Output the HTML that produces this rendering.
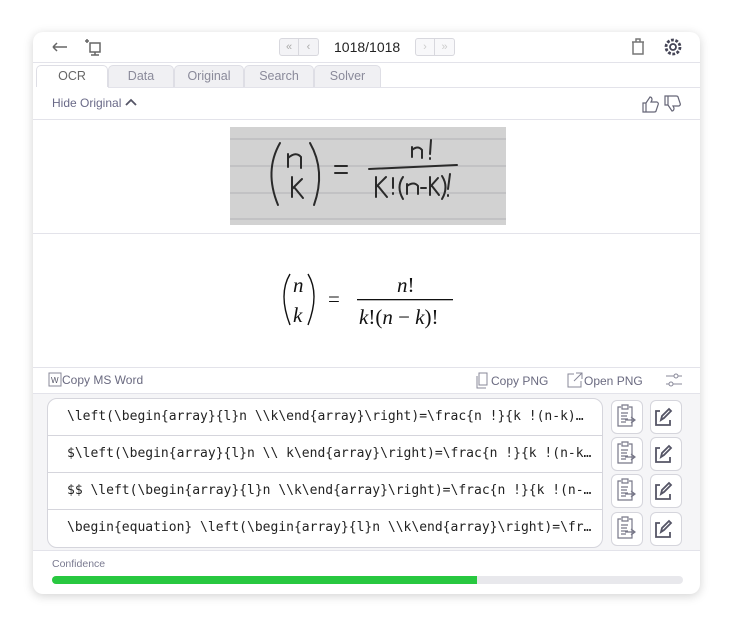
<!DOCTYPE html>
<html><head><style>
*{box-sizing:border-box;margin:0;padding:0}
body{width:732px;height:628px;background:#fff;font-family:"Liberation Sans",sans-serif;position:relative;overflow:hidden}
.card{position:absolute;left:33px;top:32px;width:667px;height:562px;background:#fff;border-radius:10px;box-shadow:0 2px 10px rgba(0,0,0,.18);overflow:hidden}
.abs{position:absolute}
.hl{position:absolute;left:0;width:667px;height:1px;background:#e3e3ea}
.tab{position:absolute;top:33px;height:22px;background:#f0f0f3;border:1px solid #dedee5;border-bottom:none;border-radius:5px 5px 0 0;font-size:12.5px;color:#8a8a9a;text-align:center;line-height:21px}
.code{position:absolute;left:14px;width:556px;background:#fff;border:1px solid #d5d5dc;font-family:"DejaVu Sans Mono","Liberation Mono",monospace;font-size:13px;color:#222;padding-left:19px;line-height:36px;white-space:nowrap;overflow:hidden;letter-spacing:0}
.btn{position:absolute;width:32px;height:34px;border:1px solid #d5d5dc;border-radius:6px;background:#fff}
.nav{position:absolute;top:6px;height:18px;border:1px solid #d8d8de;background:#f3f3f6;color:#aaa;font-size:11px;text-align:center;line-height:16px}
</style></head><body>
<div class="card">
 <svg class="abs" style="left:18px;top:7px" width="18" height="16"><path d="M2 8H16M2 8L6 4M2 8L6 12" stroke="#666" stroke-width="1.5" fill="none"/></svg>
 <svg class="abs" style="left:50px;top:5px" width="20" height="20"><path d="M4 2V6M2 4H6M7 6H17V15H7ZM12 15V18M8 18H16" stroke="#666" stroke-width="1.5" fill="none"/></svg>
 <div class="nav" style="left:246px;width:20px;border-radius:3px 0 0 3px">«</div>
 <div class="nav" style="left:266px;width:20px;border-radius:0 3px 3px 0;border-left:none">‹</div>
 <div class="abs" style="left:301px;top:7px;font-size:14px;color:#222">1018/1018</div>
 <div class="nav" style="left:382px;width:20px;border-radius:3px 0 0 3px;background:#f8f8fa;color:#ccc">›</div>
 <div class="nav" style="left:402px;width:20px;border-radius:0 3px 3px 0;border-left:none;background:#f8f8fa;color:#ccc">»</div>
 <svg class="abs" style="left:596px;top:5px" width="18" height="20"><path d="M3 5H15M7 5V2H11V5M4 5V17H14V5" stroke="#777" stroke-width="1.5" fill="none"/></svg>
 <svg class="abs" style="left:630px;top:5px" width="20" height="20"><circle cx="10" cy="10" r="3" stroke="#445" stroke-width="1.8" fill="none"/><circle cx="10" cy="10" r="7" stroke="#445" stroke-width="2.8" fill="none" stroke-dasharray="2.8 1.6"/></svg>
 <div class="hl" style="top:30px"></div>
 <div class="tab" style="left:3px;width:72px;background:#fff;color:#666">OCR</div>
 <div class="tab" style="left:75px;width:66px">Data</div>
 <div class="tab" style="left:141px;width:70px">Original</div>
 <div class="tab" style="left:211px;width:70px">Search</div>
 <div class="tab" style="left:281px;width:67px">Solver</div>
 <div class="hl" style="top:55px;left:75px;width:592px"></div>
 <div class="abs" style="left:19px;top:64px;font-size:12px;color:#6a6a88">Hide Original <svg width="12" height="9"><path d="M1 7L6 2L11 7" stroke="#556" stroke-width="1.8" fill="none"/></svg></div>
 <svg class="abs" style="left:608px;top:62px" width="40" height="20"><path d="M2 9H5V18H2ZM5 9L9 3Q11 3 11 6L10 8H16Q18 9 17 11L15 17Q15 18 13 18H5" stroke="#667" stroke-width="1.2" fill="none"/><path d="M24 11H27V2H24ZM27 11L31 17Q33 17 33 14L32 12H38Q40 11 39 9L37 3Q37 2 35 2H27" stroke="#667" stroke-width="1.2" fill="none"/></svg>
 <div class="hl" style="top:87px"></div>
 <svg class="abs" style="left:197px;top:95px" width="276" height="98">
  <rect width="276" height="98" fill="#d2d2d2"/>
  <g stroke="#b8b8bc" stroke-width="1.2"><line x1="0" y1="12" x2="276" y2="12"/><line x1="0" y1="39" x2="276" y2="39"/><line x1="0" y1="66" x2="276" y2="66"/><line x1="0" y1="92" x2="276" y2="92"/></g>
  <g stroke="#2a2a2a" stroke-width="2" fill="none" stroke-linecap="round">
   <path d="M50 16Q34 44 48 78"/><path d="M80 16Q96 44 84 78"/>
   <path d="M58 27V40M58 31Q66 24 71 30V41"/><path d="M62 50V70M62 62L72 52M64 60L73 71"/>
   <path d="M105 39H117M105 46H117"/>
   <path d="M182 20V30M182 23Q188 18 192 23V31M201 13L200 27M200 31V32"/>
   <path d="M139 42L227 38"/>
   <path d="M146 50V70M146 60L156 50M148 59L157 70M163 51V61M163 66V67"/>
   <path d="M173 50Q166 60 173 72M177 57V67M177 59Q184 54 188 59V67M191 61H196M200 50V68M200 60L208 51M202 59L209 68M212 49Q219 60 212 72M220 47L218 62M218 68V69"/>
  </g>
 </svg>
 <div class="hl" style="top:201px"></div>
 <svg class="abs" style="left:240px;top:235px" width="190" height="65">
  <g font-family="Liberation Serif,serif" font-size="21" fill="#111">
   <path d="M17 7Q5 27 17 58" stroke="#111" stroke-width="1.4" fill="none"/>
   <path d="M35 7Q47 27 35 58" stroke="#111" stroke-width="1.4" fill="none"/>
   <text x="20" y="25" font-style="italic">n</text>
   <text x="20" y="55" font-style="italic">k</text>
   <text x="55" y="39">=</text>
   <text x="124" y="25"><tspan font-style="italic">n</tspan>!</text>
   <rect x="84" y="32" width="96" height="1.3"/>
   <text x="86" y="57"><tspan font-style="italic">k</tspan>!(<tspan font-style="italic">n</tspan> − <tspan font-style="italic">k</tspan>)!</text>
  </g>
 </svg>
 <div class="hl" style="top:335px"></div>
 <div class="abs" style="left:15px;top:340px;font-size:12px;color:#6a6a80"><svg width="14" height="15" style="vertical-align:-3px"><rect x="1" y="1" width="12" height="13" fill="none" stroke="#889" stroke-width="1"/><text x="3" y="11" font-size="8" fill="#556">W</text></svg>Copy MS Word</div>
 <div class="abs" style="left:442px;top:340px;font-size:12px;color:#6a6a80"><svg width="16" height="17" style="vertical-align:-4px"><path d="M4 1H12V13H4ZM2 4V16H11" fill="none" stroke="#889"/></svg>Copy PNG</div>
 <div class="abs" style="left:534px;top:340px;font-size:12px;color:#6a6a80"><svg width="17" height="16" style="vertical-align:-3px"><path d="M7 2H1V15H14V9M9 1H15V7M15 1L7 9" fill="none" stroke="#889"/></svg>Open PNG</div>
 <svg class="abs" style="left:632px;top:340px" width="18" height="16"><g stroke="#889" fill="#fff"><line x1="1" y1="4" x2="17" y2="4"/><line x1="1" y1="12" x2="17" y2="12"/><circle cx="11" cy="4" r="2"/><circle cx="6" cy="12" r="2"/></g></svg>
 <div class="hl" style="top:361px"></div>
 <div class="abs" style="left:0;top:362px;width:667px;height:156px;background:#f5f5f7"></div>
 <div class="code" style="top:366px;height:38px;border-radius:10px 10px 0 0">\left(\begin{array}{l}n \\k\end{array}\right)=\frac{n !}{k !(n-k)…</div>
 <div class="code" style="top:403px;height:38px">$\left(\begin{array}{l}n \\ k\end{array}\right)=\frac{n !}{k !(n-k…</div>
 <div class="code" style="top:440px;height:38px">$$ \left(\begin{array}{l}n \\k\end{array}\right)=\frac{n !}{k !(n-…</div>
 <div class="code" style="top:477px;height:39px;border-radius:0 0 10px 10px">\begin{equation} \left(\begin{array}{l}n \\k\end{array}\right)=\fr…</div>
 <div class="btn" style="left:578px;top:368px"></div><div class="btn" style="left:617px;top:368px"></div>
 <div class="btn" style="left:578px;top:405px"></div><div class="btn" style="left:617px;top:405px"></div>
 <div class="btn" style="left:578px;top:442px"></div><div class="btn" style="left:617px;top:442px"></div>
 <div class="btn" style="left:578px;top:480px"></div><div class="btn" style="left:617px;top:480px"></div>
 <svg class="abs" style="left:578px;top:368px" width="80" height="150">
  <defs><g id="cb" fill="none" stroke="#778" stroke-width="1.2"><path d="M10 7H7V26H21V7H18M11 5H17V9H11ZM10 13H17M10 16H16M10 19H17M10 22H15M14 20H24M20 17L24 20L20 23"/></g>
  <g id="ed" fill="none" stroke="#556" stroke-width="1.8"><path d="M49 11H45V25H59V20M50 20L51 16L58 9L60 11L53 18Z"/></g></defs>
  <use href="#cb"/><use href="#ed"/>
  <use href="#cb" y="37"/><use href="#ed" y="37"/>
  <use href="#cb" y="74"/><use href="#ed" y="74"/>
  <use href="#cb" y="112"/><use href="#ed" y="112"/>
 </svg>
 <div class="hl" style="top:518px"></div>
 <div class="abs" style="left:19px;top:526px;font-size:10.5px;color:#7a7a90">Confidence</div>
 <div class="abs" style="left:19px;top:544px;width:631px;height:8px;border-radius:4px;background:#e8e8ec"></div>
 <div class="abs" style="left:19px;top:544px;width:425px;height:8px;border-radius:4px 0 0 4px;background:#28c840"></div>
</div>
</body></html>
